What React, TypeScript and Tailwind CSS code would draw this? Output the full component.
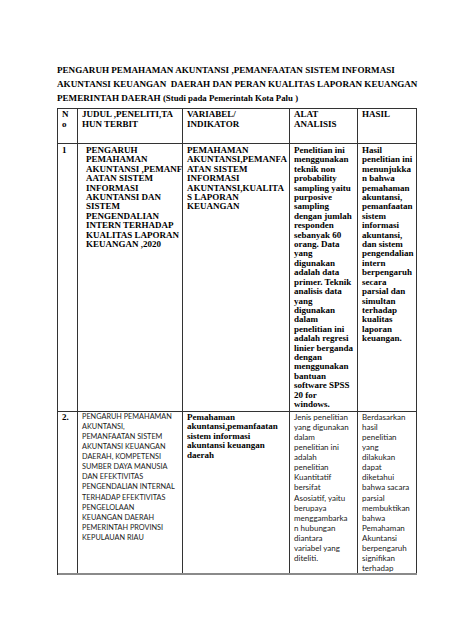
const serif = "font-['Liberation_Serif','Times_New_Roman',serif]";
const sans = "font-['Lato','Open_Sans',sans-serif]";

type Cell = { lines: string[]; kind: "serif" | "sans" | "caps" };

const header: string[][] = [
  ["N", "o"],
  ["JUDUL ,PENELITI,TA", "HUN TERBIT"],
  ["VARIABEL/", "INDIKATOR"],
  ["ALAT", "ANALISIS"],
  ["HASIL"],
];

const row1: string[][] = [
  ["1"],
  [
    "PENGARUH",
    "PEMAHAMAN",
    "AKUNTANSI ,PEMANF",
    "AATAN SISTEM",
    "INFORMASI",
    "AKUNTANSI DAN",
    "SISTEM",
    "PENGENDALIAN",
    "INTERN TERHADAP",
    "KUALITAS LAPORAN",
    "KEUANGAN ,2020",
  ],
  [
    "PEMAHAMAN",
    "AKUNTANSI,PEMANFA",
    "ATAN SISTEM",
    "INFORMASI",
    "AKUNTANSI,KUALITA",
    "S LAPORAN",
    "KEUANGAN",
  ],
  [
    "Penelitian ini",
    "menggunakan",
    "teknik non",
    "probability",
    "sampling yaitu",
    "purposive",
    "sampling",
    "dengan jumlah",
    "responden",
    "sebanyak 60",
    "orang. Data",
    "yang",
    "digunakan",
    "adalah data",
    "primer. Teknik",
    "analisis data",
    "yang",
    "digunakan",
    "dalam",
    "penelitian ini",
    "adalah regresi",
    "linier berganda",
    "dengan",
    "menggunakan",
    "bantuan",
    "software SPSS",
    "20 for",
    "windows.",
  ],
  [
    "Hasil",
    "penelitian ini",
    "menunjukka",
    "n bahwa",
    "pemahaman",
    "akuntansi,",
    "pemanfaatan",
    "sistem",
    "informasi",
    "akuntansi,",
    "dan sistem",
    "pengendalian",
    "intern",
    "berpengaruh",
    "secara",
    "parsial dan",
    "simultan",
    "terhadap",
    "kualitas",
    "laporan",
    "keuangan.",
  ],
];

const row2: Cell[] = [
  { kind: "serif", lines: ["2."] },
  {
    kind: "caps",
    lines: [
      "PENGARUH PEMAHAMAN",
      "AKUNTANSI,",
      "PEMANFAATAN SISTEM",
      "AKUNTANSI KEUANGAN",
      "DAERAH, KOMPETENSI",
      "SUMBER DAYA MANUSIA",
      "DAN EFEKTIVITAS",
      "PENGENDALIAN INTERNAL",
      "TERHADAP EFEKTIVITAS",
      "PENGELOLAAN",
      "KEUANGAN DAERAH",
      "PEMERINTAH PROVINSI",
      "KEPULAUAN RIAU",
    ],
  },
  {
    kind: "serif",
    lines: ["Pemahaman", "akuntansi,pemanfaatan", "sistem informasi", "akuntansi keuangan", "daerah"],
  },
  {
    kind: "sans",
    lines: [
      "Jenis penelitian",
      "yang digunakan",
      "dalam",
      "penelitian ini",
      "adalah",
      "penelitian",
      "Kuantitatif",
      "bersifat",
      "Asosiatif, yaitu",
      "berupaya",
      "menggambarka",
      "n hubungan",
      "diantara",
      "variabel yang",
      "diteliti.",
    ],
  },
  {
    kind: "sans",
    lines: [
      "Berdasarkan",
      "hasil",
      "penelitian",
      "yang",
      "dilakukan",
      "dapat",
      "diketahui",
      "bahwa sacara",
      "parsial",
      "membuktikan",
      "bahwa",
      "Pemahaman",
      "Akuntansi",
      "berpengaruh",
      "signifikan",
      "terhadap",
    ],
  },
];

const widths = ["w-[20px]", "w-[105px]", "w-[107px]", "w-[68px]", "w-[59px]"];

const row2Font = {
  serif: `${serif} font-bold text-[9px] leading-[9.4px] pt-[1px]`,
  sans: `${sans} text-[8px] leading-[10.07px] text-[#222]`,
  caps: `${sans} text-[7.3px] leading-[10.07px] text-[#222]`,
};

function Lines({ lines }: { lines: string[] }) {
  return (
    <>
      {lines.map((l, i) => (
        <div key={i} className="whitespace-pre">
          {l}
        </div>
      ))}
    </>
  );
}

export default function App() {
  return (
    <div className="w-[474px] h-[632px] bg-white overflow-hidden text-black pl-[57px] pt-[63px]">
      {/* Judul */}
      <div className={`${serif} font-bold text-[9.1px] leading-[14px] whitespace-pre`}>
        <div>PENGARUH PEMAHAMAN AKUNTANSI ,PEMANFAATAN SISTEM INFORMASI</div>
        <div>AKUNTANSI KEUANGAN  DAERAH DAN PERAN KUALITAS LAPORAN KEUANGAN</div>
        <div>
          PEMERINTAH DAERAH <span className="text-[8.8px]">(Studi pada Pemerintah Kota Palu )</span>
        </div>
      </div>

      {/* Tabel */}
      <div className="mt-[3px] w-[360px] border-l border-t border-[#333]">
        <div className={`flex h-[35px] ${serif} font-bold text-[9px] leading-[9.5px]`}>
          {header.map((c, i) => (
            <div key={i} className={`${widths[i]} shrink-0 border-r border-b border-[#333] px-[4px] pt-[1px]`}>
              <Lines lines={c} />
            </div>
          ))}
        </div>

        <div className={`flex h-[268px] ${serif} font-bold text-[9px] leading-[9.4px]`}>
          {row1.map((c, i) => (
            <div
              key={i}
              className={`${widths[i]} shrink-0 border-r border-b border-[#333] pt-[2px] ${i === 1 ? "pl-[8px]" : "pl-[4px]"}`}
            >
              <Lines lines={c} />
            </div>
          ))}
        </div>

        <div className="flex h-[163px] border-b-2 border-[#8a8a8a]">
          {row2.map((c, i) => (
            <div
              key={i}
              className={`${widths[i]} shrink-0 border-r border-[#333] overflow-hidden pl-[4px] ${row2Font[c.kind]}`}
            >
              <Lines lines={c.lines} />
            </div>
          ))}
        </div>
      </div>
    </div>
  );
}
